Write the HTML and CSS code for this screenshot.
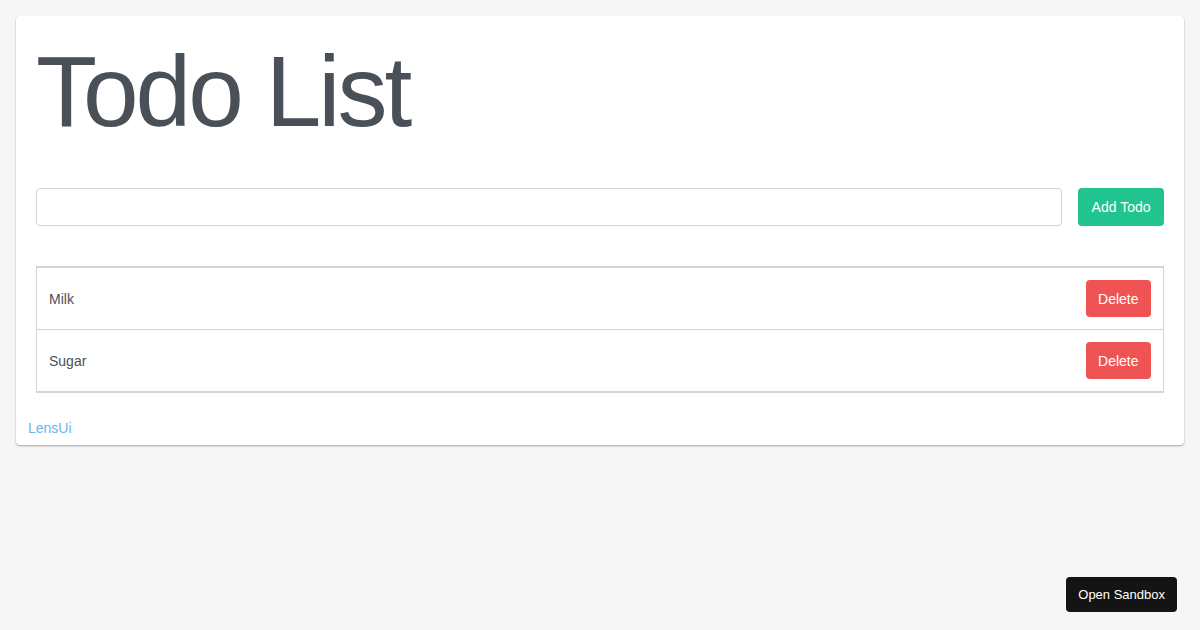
FILE: index.html
```html
<!DOCTYPE html>
<html lang="en">
<head>
  <meta charset="UTF-8" />
  <meta name="viewport" content="width=device-width, initial-scale=1">
  <title>Todo List</title>
  <link rel="stylesheet" href="styles.css">
</head>
<body>
  <div class="card">
    <div class="card-body">
      <h1 class="title">Todo List</h1>
      <form class="todo-form" onsubmit="return false">
        <input type="text" class="todo-input" aria-label="New todo">
        <button type="submit" class="btn btn-add">Add Todo</button>
      </form>
      <ul class="todo-list">
        <li class="todo-item">
          <span>Milk</span>
          <button type="button" class="btn btn-delete">Delete</button>
        </li>
        <li class="todo-item">
          <span>Sugar</span>
          <button type="button" class="btn btn-delete">Delete</button>
        </li>
      </ul>
    </div>
    <div class="card-footer">
      <a href="#" class="brand">LensUi</a>
    </div>
  </div>

  <a href="#" class="sandbox-btn">Open Sandbox</a>
</body>
</html>
```

FILE: styles.css
```css
/* Simple todo card */
body {
  background: #f6f6f6;
  color: #495057;
  font-family: "Liberation Sans", Arial, sans-serif;
  margin: 0;
  padding: 16px;
}
.card {
  background: #fff;
  border-radius: 4px;
  box-shadow: 0 1px 2px rgba(0,0,0,0.35);
}
.card-body {
  padding: 20px 20px 0;
}
.title {
  font-size: 100px;
  font-weight: normal;
  line-height: 1.1;
  letter-spacing: -3px;
  color: #495057;
  margin: 0 0 42px;
}
.todo-form {
  display: flex;
  gap: 16px;
  margin-bottom: 40px;
}
.todo-input {
  flex: 1;
  height: 38px;
  box-sizing: border-box;
  border: 1px solid #ced4da;
  border-radius: 4px;
  padding: 6px 12px;
  font-size: 14px;
}
.btn {
  border: none;
  border-radius: 4px;
  color: #fff;
  font-family: inherit;
  font-size: 14px;
  cursor: pointer;
}
.btn-add {
  background: #21c38e;
  height: 38px;
  padding: 0 13.5px;
}
.btn-delete {
  background: #f05354;
  height: 37px;
  padding: 0 12.5px;
}
.todo-list {
  list-style: none;
  margin: 0;
  padding: 0;
  border: 1px solid #d1d5da;
}
.todo-item {
  display: flex;
  align-items: center;
  justify-content: space-between;
  padding: 12px;
  border-bottom: 1px solid #d1d5da;
  font-size: 14px;
}
.todo-item:first-child {
  border-top: 1px solid #d1d5da;
}
.card-footer {
  padding: 26px 12px 8px;
}
.brand {
  color: #6cb6ec;
  text-decoration: none;
  font-size: 14px;
}
.sandbox-btn {
  position: fixed;
  right: 23px;
  bottom: 18px;
  background: #141414;
  color: #fff;
  font-size: 13px;
  text-decoration: none;
  padding: 10px 12px;
  border-radius: 4px;
}
```
